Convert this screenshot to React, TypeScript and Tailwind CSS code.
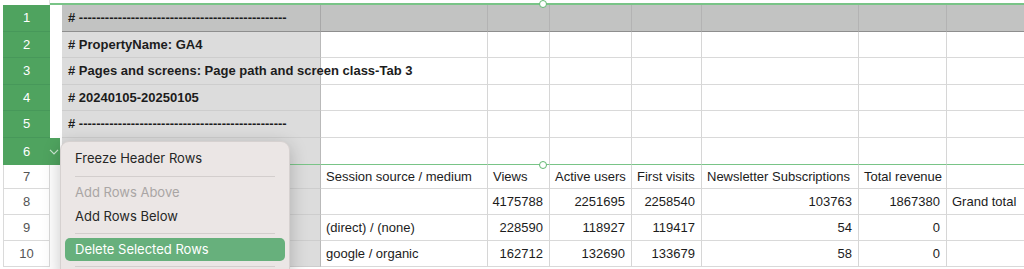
import React from "react";

const colW = [
  "w-[259px]",
  "w-[167px]",
  "w-[62px]",
  "w-[82px]",
  "w-[70px]",
  "w-[157px]",
  "w-[88px]",
  "w-[160px]",
];

const dash = "-".repeat(48);

type RowDef = { h: string; cells: (string | number)[] };

const headRows: RowDef[] = [
  { h: "h-[27px]", cells: ["# " + dash] },
  { h: "h-[26px]", cells: ["# PropertyName: GA4"] },
  { h: "h-[27px]", cells: ["# Pages and screens: Page path and screen class-Tab 3"] },
  { h: "h-[26px]", cells: ["# 20240105-20250105"] },
  { h: "h-[27px]", cells: ["# " + dash] },
  { h: "h-[27px]", cells: [""] },
];

const bodyRows: RowDef[] = [
  { h: "h-[24px]", cells: ["", "Session source / medium", "Views", "Active users", "First visits", "Newsletter Subscriptions", "Total revenue", ""] },
  { h: "h-[26px]", cells: ["", "", 4175788, 2251695, 2258540, 103763, 1867380, "Grand total"] },
  { h: "h-[26px]", cells: ["", "(direct) / (none)", 228590, 118927, 119417, 54, 0, ""] },
  { h: "h-[26px]", cells: ["", "google / organic", 162712, 132690, 133679, 58, 0, ""] },
];

function GreenHeader({ n, selected }: { n: number; selected?: boolean }) {
  return (
    <div className="flex w-[62px] shrink-0 pl-[3px]">
      <div
        className={
          selected
            ? "relative flex w-[57px] items-center bg-[#4fa35f] text-white"
            : "flex w-[47px] items-center justify-center border-b border-[#47985a] bg-[#4fa35f] text-white"
        }
      >
        {selected ? (
          <>
            <span className="w-[47px] text-center">{n}</span>
            <svg width="10" height="6" viewBox="0 0 10 6" className="ml-[-1px]">
              <polyline points="1,0.8 5,4.8 9,0.8" fill="none" stroke="#cfe7d4" strokeWidth="1.2" />
            </svg>
          </>
        ) : (
          <span>{n}</span>
        )}
      </div>
    </div>
  );
}

function WhiteHeader({ n }: { n: number }) {
  return (
    <div className="flex w-[62px] shrink-0 pl-[3px]">
      <div className="flex w-[47px] items-center justify-center border-x border-b border-[#dadada] bg-white text-[#555]">
        {n}
      </div>
    </div>
  );
}

export default function App() {
  return (
    <div className="relative h-[269px] w-[1024px] overflow-hidden bg-white font-['Liberation_Sans',Arial,sans-serif] text-[13px] text-[#1c1c1c]">
      {/* top selection line */}
      <div className="flex h-[5px]">
        <div className="h-[5px] w-[50px] border-r border-[#e2e2e2]" />
        <div className="mt-[3px] h-[2px] flex-1 bg-[#79c487]" />
      </div>

      {/* header rows 1-6 */}
      {headRows.map((r, i) => (
        <div key={i} className={"flex " + r.h}>
          <GreenHeader n={i + 1} selected={i === 5} />
          {colW.map((w, c) => {
            const isA = c === 0;
            const isFirst = i === 0;
            const isLast = i === 5;
            let cls = "shrink-0 flex items-center whitespace-nowrap border-r border-b " + w + " ";
            if (isFirst) {
              cls += "bg-[#c2c3c2] border-b-[#8e8e8e] " + (isA ? "border-r-[#a8a8a8] " : "border-r-[#b3b3b3] ");
            } else if (isA) {
              cls += "bg-[#dcdcdc] border-r-[#b9b9b9] " + (isLast ? "border-b-[#79c487] " : "border-b-[#cdcdcd] ");
            } else {
              cls += "bg-white border-r-[#d6d6d6] " + (isLast ? "border-b-[#79c487] " : "border-b-[#d9d9d9] ");
            }
            return (
              <div key={c} className={cls}>
                {isA && r.cells[0] !== "" ? (
                  <span className="relative z-10 pl-[6px] font-bold">{r.cells[0]}</span>
                ) : null}
              </div>
            );
          })}
        </div>
      ))}

      {/* body rows 7-10 */}
      {bodyRows.map((r, i) => (
        <div key={i} className={"flex " + r.h}>
          <WhiteHeader n={i + 7} />
          {colW.map((w, c) => {
            const v = r.cells[c];
            const isNum = typeof v === "number";
            const isA = c === 0;
            let cls = "shrink-0 flex items-center whitespace-nowrap border-r border-b " + w + " ";
            cls += isA ? "bg-[#dcdcdc] border-r-[#b9b9b9] border-b-[#cdcdcd] " : "bg-white border-r-[#d6d6d6] border-b-[#d9d9d9] ";
            cls += isNum ? "justify-end pr-[6px] " : "pl-[5px] ";
            return (
              <div key={c} className={cls}>
                {v !== "" ? <span>{v}</span> : null}
              </div>
            );
          })}
        </div>
      ))}

      {/* selection handles */}
      <div className="absolute left-[539px] top-[0px] h-[8px] w-[8px] rounded-full border-[1.5px] border-[#62b872] bg-white" />
      <div className="absolute left-[539px] top-[161px] h-[8px] w-[8px] rounded-full border-[1.5px] border-[#62b872] bg-white" />

      {/* context menu */}
      <div className="absolute left-[60px] top-[141px] h-[140px] w-[230px] rounded-[9px] border border-[#d6d1d0] bg-[#ebe6e5] pt-[5px] font-['Inter',sans-serif] text-[13px] text-[#262626] shadow-[0_4px_18px_rgba(0,0,0,0.22)]">
        <div className="flex h-[24px] items-center px-[14px]">Freeze Header Rows</div>
        <div className="flex h-[10px] items-center px-[14px]">
          <div className="h-px w-full bg-[#d3cecd]" />
        </div>
        <div className="flex h-[24px] items-center px-[14px] text-[#a9a5a4]">Add Rows Above</div>
        <div className="flex h-[23px] items-center px-[14px]">Add Rows Below</div>
        <div className="flex h-[10px] items-center px-[14px]">
          <div className="h-px w-full bg-[#d3cecd]" />
        </div>
        <div className="mx-[4px] flex h-[23px] items-center rounded-[5px] bg-[#67b07c] px-[10px] text-white">
          Delete Selected Rows
        </div>
        <div className="flex h-[10px] items-center px-[14px]">
          <div className="h-px w-full bg-[#d3cecd]" />
        </div>
      </div>
    </div>
  );
}
